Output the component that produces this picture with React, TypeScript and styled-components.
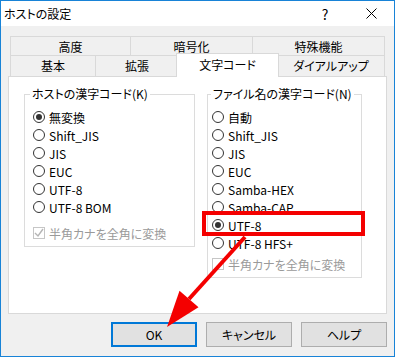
import React from 'react';
import styled, { createGlobalStyle } from 'styled-components';

const GlobalStyle = createGlobalStyle`
  html, body {
    margin: 0;
    padding: 0;
    background: #ffffff;
  }
  body {
    font-family: "Noto Sans CJK JP", "Noto Sans", sans-serif;
    font-size: 12px;
    font-feature-settings: "palt";
    color: #000;
  }
`;

type TabDef = { label: string; width: number; selected?: boolean };

const topTabs: TabDef[] = [
  { label: '高度', width: 120 },
  { label: '暗号化', width: 122 },
  { label: '特殊機能', width: 133 },
];

const bottomTabs: TabDef[] = [
  { label: '基本', width: 85 },
  { label: '拡張', width: 83 },
  { label: '文字コード', width: 99, selected: true },
  { label: 'ダイアルアップ', width: 108 },
];

const hostCodes = ['無変換', 'Shift_JIS', 'JIS', 'EUC', 'UTF-8', 'UTF-8 BOM'];
const fileCodes = [
  '自動',
  'Shift_JIS',
  'JIS',
  'EUC',
  'Samba-HEX',
  'Samba-CAP',
  'UTF-8',
  'UTF-8 HFS+',
];

const App: React.FC = () => {
  return (
    <>
      <GlobalStyle />
      <Window>
        <TitleBar>
          <Title>ホストの設定</Title>
          <Help>?</Help>
          <Close>
            <svg width="11" height="11" viewBox="0 0 11 11">
              <path d="M0.5 0.5 L10.5 10.5 M10.5 0.5 L0.5 10.5" stroke="#000" strokeWidth="1" />
            </svg>
          </Close>
        </TitleBar>

        <Body>
          <TabStrip>
            <TabRow $height={19}>
              {topTabs.map((t, i) => (
                <Tab key={t.label} $width={t.width} $last={i === topTabs.length - 1} $top>
                  {t.label}
                </Tab>
              ))}
            </TabRow>
            <TabRow $height={21}>
              {bottomTabs.map((t, i) =>
                t.selected ? (
                  <ActiveTab key={t.label} $width={t.width}>
                    {t.label}
                  </ActiveTab>
                ) : (
                  <Tab key={t.label} $width={t.width} $last={i === bottomTabs.length - 1}>
                    {t.label}
                  </Tab>
                )
              )}
            </TabRow>
          </TabStrip>

          <Panel>
            <Group $width={171}>
              <Legend $offset={5}>ホストの漢字コード(K)</Legend>
              <Options $indent={8}>
                {hostCodes.map((c, i) => (
                  <Option key={c}>
                    <Radio $checked={i === 0} />
                    <span>{c}</span>
                  </Option>
                ))}
                <CheckRow $gap={8}>
                  <CheckBox>
                    <svg width="12" height="12" viewBox="0 0 12 12">
                      <polyline points="2,6 5,9 10,2" fill="none" stroke="#b5b5b5" strokeWidth="1.4" />
                    </svg>
                  </CheckBox>
                  <span>半角カナを全角に変換</span>
                </CheckRow>
              </Options>
            </Group>

            <Group $width={155}>
              <Legend $offset={3}>ファイル名の漢字コード(N)</Legend>
              <Options $indent={4}>
                {fileCodes.map((c, i) => (
                  <Option key={c + i}>
                    <Radio $checked={i === 6} />
                    <span>{c}</span>
                  </Option>
                ))}
                <CheckRow $gap={3}>
                  <CheckBox />
                  <span>半角カナを全角に変換</span>
                </CheckRow>
              </Options>
            </Group>
          </Panel>

          <ButtonBar>
            <Button $default>OK</Button>
            <Button>キャンセル</Button>
            <Button>ヘルプ</Button>
          </ButtonBar>
        </Body>

        <Highlight />
        <Arrow width="395" height="357" viewBox="0 0 395 357">
          <line x1="245" y1="237" x2="189" y2="299" stroke="#f40000" strokeWidth="4" />
          <polygon points="167,327 198.5,307.2 179.5,290.8" fill="#f40000" />
        </Arrow>
      </Window>
    </>
  );
};

const Window = styled.div`
  position: relative;
  width: 395px;
  height: 357px;
  box-sizing: border-box;
  border: 1px solid #1883d7;
  background: #f0f0f0;
  display: flex;
  flex-direction: column;
  overflow: hidden;
`;

const TitleBar = styled.div`
  height: 25px;
  background: #ffffff;
  display: flex;
  align-items: center;
  padding-left: 3px;
`;

const Title = styled.div`
  flex: 1;
  font-size: 12px;
`;

const Help = styled.div`
  width: 46px;
  text-align: center;
  font-size: 14px;
  margin-right: 0px;
`;

const Close = styled.div`
  width: 46px;
  display: flex;
  justify-content: center;
  align-items: center;
`;

const Body = styled.div`
  flex: 1;
  padding: 10px 7px 0 7px;
`;

const TabStrip = styled.div`
  margin: 0 2px;
`;

const TabRow: any = styled.div<{ $height: number }>`
  display: flex;
  height: ${(p) => p.$height}px;
`;

const Tab: any = styled.div<{ $width: number; $last?: boolean; $top?: boolean }>`
  flex: none;
  width: ${(p) => p.$width}px;
  box-sizing: border-box;
  border-top: 1px solid #d9d9d9;
  border-left: 1px solid #d9d9d9;
  border-right: ${(p) => (p.$last ? '1px solid #d9d9d9' : 'none')};
  display: flex;
  align-items: center;
  justify-content: center;
  padding-top: ${(p) => (p.$top ? 2 : 0)}px;
  line-height: 1;
`;

const ActiveTab: any = styled.div<{ $width: number }>`
  position: relative;
  z-index: 1;
  flex: none;
  width: ${(p) => p.$width + 4}px;
  height: 24px;
  margin: -2px -2px 0 -2px;
  box-sizing: border-box;
  background: #ffffff;
  border: 1px solid #d9d9d9;
  border-bottom: none;
  display: flex;
  align-items: center;
  justify-content: center;
  padding-bottom: 1px;
  line-height: 1;
`;

const Panel = styled.div`
  height: 238px;
  box-sizing: border-box;
  background: #ffffff;
  border: 1px solid #d9d9d9;
  display: flex;
  align-items: flex-start;
  gap: 12px;
  padding: 9px 0 0 15px;
`;

const Group: any = styled.fieldset<{ $width: number }>`
  width: ${(p) => p.$width}px;
  box-sizing: border-box;
  margin: 0;
  padding: 0 0 4px 0;
  border: 1px solid #dcdcdc;
  min-width: 0;
`;

const Legend: any = styled.legend<{ $offset: number }>`
  margin-left: ${(p) => p.$offset}px;
  padding: 0 2px;
  line-height: 16px;
  font-size: 12px;
`;

const Options: any = styled.div<{ $indent: number }>`
  padding: 6px 0 0 ${(p) => p.$indent}px;
  display: flex;
  flex-direction: column;
`;

const Option = styled.div`
  display: flex;
  align-items: center;
  gap: 4px;
  height: 18px;
  white-space: nowrap;
`;

const Radio: any = styled.span<{ $checked?: boolean }>`
  width: 12px;
  height: 12px;
  box-sizing: border-box;
  border-radius: 50%;
  border: 1px solid #333333;
  background: #ffffff;
  display: flex;
  align-items: center;
  justify-content: center;
  flex: none;
  &::after {
    content: '';
    display: ${(p) => (p.$checked ? 'block' : 'none')};
    width: 6px;
    height: 6px;
    border-radius: 50%;
    background: #333333;
  }
`;

const CheckRow: any = styled.div<{ $gap: number }>`
  display: flex;
  align-items: center;
  gap: 4px;
  height: 18px;
  margin-top: ${(p) => p.$gap}px;
  color: #9a9a9a;
  white-space: nowrap;
`;

const CheckBox = styled.span`
  width: 12px;
  height: 12px;
  box-sizing: border-box;
  border: 1px solid #c6c6c6;
  background: #ffffff;
  flex: none;
  display: flex;
  svg {
    margin: -1px;
  }
`;

const ButtonBar = styled.div`
  display: flex;
  justify-content: flex-end;
  gap: 9px;
  margin-top: 8px;
`;

const Button: any = styled.button<{ $default?: boolean }>`
  width: 86px;
  height: 25px;
  box-sizing: border-box;
  background: #e1e1e1;
  border: ${(p) => (p.$default ? '2px solid #0078d7' : '1px solid #adadad')};
  font-family: inherit;
  font-size: 12px;
  font-feature-settings: "palt";
  color: #000;
  padding: 0;
`;

const Highlight = styled.div`
  position: absolute;
  left: 201px;
  top: 210px;
  width: 163px;
  height: 25px;
  box-sizing: border-box;
  border: 4px solid #f40000;
  pointer-events: none;
`;

const Arrow = styled.svg`
  position: absolute;
  left: -1px;
  top: -1px;
  pointer-events: none;
`;

export default App;
